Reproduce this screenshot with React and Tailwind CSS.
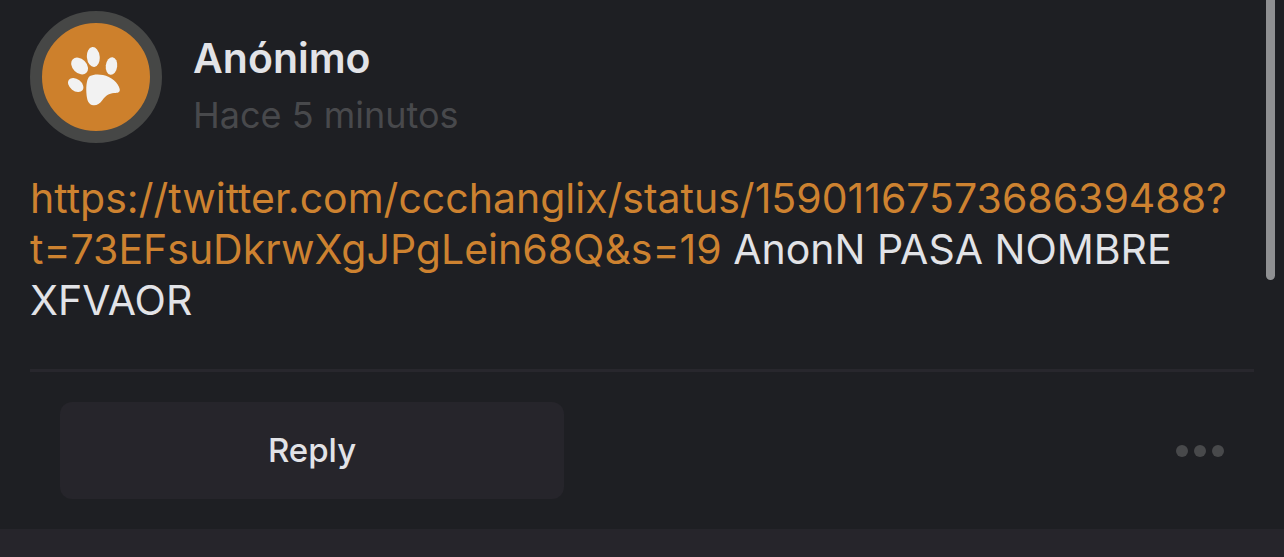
function PawIcon() {
  return (
    <svg viewBox="0 0 57 60" className="h-[60px] w-[57px]" fill="#f2f2f2" aria-hidden="true">
      <ellipse cx="25.3" cy="10" rx="6.4" ry="10" transform="rotate(-6 25.3 10)" />
      <ellipse cx="11.6" cy="19" rx="7" ry="9.6" transform="rotate(-45 11.6 19)" />
      <ellipse cx="43.5" cy="19" rx="5.7" ry="8.9" transform="rotate(7 43.5 19)" />
      <ellipse cx="7.7" cy="38" rx="5.9" ry="8.6" transform="rotate(-52 7.7 38)" />
      <path d="M22 29C25 27.400 30 27 35 28C43 29.500 50.500 36 51.700 42C52.300 45.500 50 46 46 46C41 46.300 37.500 49 34.500 53C31.500 57 29 58.500 25.500 58.300C20.500 58 18.800 53 18.400 46C18 38 18.800 31.500 22 29Z" />
    </svg>
  );
}

export default function App() {
  return (
    <main className="relative min-h-screen overflow-hidden bg-[#26252b] font-['Inter',sans-serif] text-[#e2e3e7]">
      <article className="bg-[#1e1f23] px-[30px] pt-[11px] pb-[30px]">
        <header className="flex items-start gap-[31px]">
          <div className="flex size-[132px] shrink-0 items-center justify-center rounded-full border-12 border-[#464746] bg-[#cd802c]">
            <PawIcon />
          </div>
          <div className="flex flex-col gap-[9px] pt-[22px]">
            <h2 className="text-[41px] leading-[50px] font-semibold">Anónimo</h2>
            <p className="text-[36px] leading-[46px] text-[#48494c]">Hace 5 minutos</p>
          </div>
        </header>

        <p className="mt-[30px] text-[41px] leading-[51px] wrap-anywhere">
          <a href="https://twitter.com/ccchanglix/status/1590116757368639488?t=73EFsuDkrwXgJPgLein68Q&s=19" className="text-[#cd8230]">
            https://twitter.com/ccchanglix/status/1590116757368639488?<wbr />t=73EFsuDkrwXgJPgLein68Q&amp;s=19
          </a>{" "}
          AnonN PASA NOMBRE XFVAOR
        </p>

        <footer className="mt-[43px] flex items-center justify-between border-t-3 border-[#28272d] px-[30px] pt-[30px]">
          <button type="button" className="h-[97px] w-[504px] rounded-xl bg-[#26252b] text-[33px] font-medium">
            Reply
          </button>
          <button type="button" aria-label="More options" className="flex gap-[6px] py-6">
            <span className="size-3 rounded-full bg-[#48494b]" />
            <span className="size-3 rounded-full bg-[#48494b]" />
            <span className="size-3 rounded-full bg-[#48494b]" />
          </button>
        </footer>
      </article>
      <div className="absolute top-0 right-[9px] h-[280px] w-[9px] rounded-b-full bg-[#8f9092]" aria-hidden="true" />
    </main>
  );
}
